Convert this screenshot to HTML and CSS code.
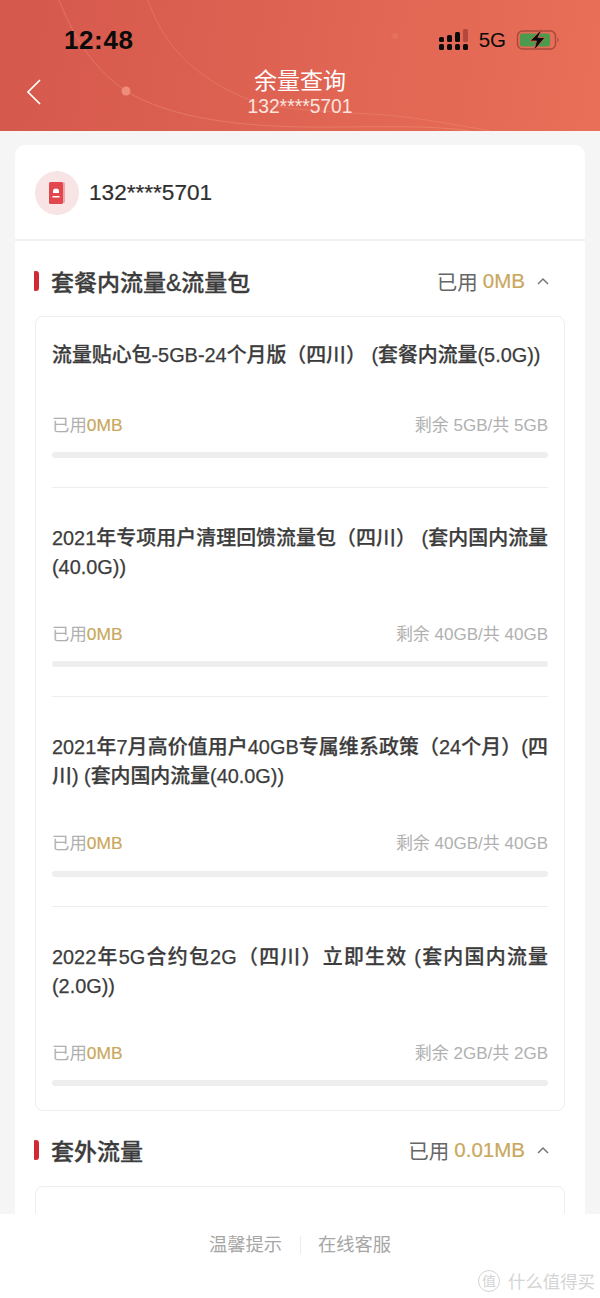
FILE: index.html
```html
<!DOCTYPE html>
<html lang="zh-CN">
<head>
    <meta charset="UTF-8">
    <meta name="viewport" content="width=device-width, initial-scale=1.0">
    <title>余量查询</title>
    <link rel="stylesheet" href="styles.css">
</head>
<body>
    <div class="page">
        <header class="header">
            <svg class="header-art" width="600" height="131" viewBox="0 0 600 131" fill="none">
                <path d="M59 0C75 40 95 70 126 91C170 118 240 128 330 127C380 127 430 125 470 131" stroke="#f0957f" stroke-width="1" opacity="0.45"/>
                <path d="M148 0C165 50 200 80 250 100C300 115 360 110 420 119C445 123 470 127 490 131" stroke="#f0957f" stroke-width="1" opacity="0.35"/>
                <circle cx="126" cy="91" r="4.500" fill="#ee8d79"/>
                <circle cx="395" cy="36" r="3" fill="#ec7f6b" opacity="0.4"/>
            </svg>
            <div class="status-bar">
                <span class="time">12:48</span>
                <div class="status-icons">
                    <svg width="30" height="22" viewBox="0 0 30 22">
                        <g fill="#0b0b0b">
                            <rect x="0" y="15" width="5" height="6" rx="1.500"/>
                            <rect x="8" y="15" width="5" height="6" rx="1.500"/>
                            <rect x="16" y="15" width="5" height="6" rx="1.500"/>
                            <rect x="24" y="15" width="5" height="6" rx="1.500"/>
                            <rect x="0" y="8" width="5" height="5" rx="1.500"/>
                            <rect x="8" y="6" width="5" height="7" rx="1.500"/>
                            <rect x="16" y="3" width="5" height="10" rx="1.500"/>
                        </g>
                        <rect x="24" y="0" width="5" height="13" rx="1.500" fill="#b5483c"/>
                    </svg>
                    <span class="net">5G</span>
                    <svg width="45" height="22" viewBox="0 0 45 22">
                        <rect x="1.500" y="2" width="38" height="18" rx="5" fill="none" stroke="#a84a3c" stroke-width="1.500"/>
                        <rect x="4" y="4.500" width="30" height="13" rx="2" fill="#4c9a4e"/>
                        <path d="M41.500 8.500c1.500.5 1.500 4.500 0 5z" fill="#a84a3c"/>
                        <path d="M26 0L14 12h6.500L18 21.500L29 8.500h-7z" fill="#0b0b0b" stroke="#d8604f" stroke-width="0.800"/>
                    </svg>
                </div>
            </div>
            <div class="nav-bar">
                <svg class="back" width="16" height="28" viewBox="0 0 16 28" fill="none">
                    <path d="M14 2L2 14l12 12" stroke="#fff" stroke-width="1.700"/>
                </svg>
                <div class="nav-title">余量查询</div>
                <div class="nav-sub">132****5701</div>
            </div>
        </header>

        <main class="content">
            <div class="card">
                <div class="user-row">
                    <div class="sim-icon">
                        <svg width="16" height="24" viewBox="0 0 16 24">
                            <rect x="3" y="1" width="13" height="21" rx="1.500" fill="#f0a5aa"/>
                            <rect x="0" y="1" width="14" height="22" rx="1.500" fill="#e2474f"/>
                            <path d="M4 10c0-1.500 1-2.500 3-2.500s3 1 3 2.500v2H4z" fill="#fff"/>
                            <rect x="3.500" y="15" width="7" height="1.500" fill="#fff"/>
                        </svg>
                    </div>
                    <span class="user-num">132****5701</span>
                </div>

                <section class="section">
                    <div class="section-head">
                        <h2 class="section-title">套餐内流量&amp;流量包</h2>
                        <div class="section-used">已用 <em>0MB</em>
                            <svg class="chevron" width="12" height="8" viewBox="0 0 12 8" fill="none"><path d="M1 7l5-5 5 5" stroke="#777" stroke-width="1.500"/></svg>
                        </div>
                    </div>
                    <div class="box">
                        <div class="item">
                            <p class="item-title">流量贴心包-5GB-24个月版（四川） (套餐内流量(5.0G))</p>
                            <div class="item-nums"><span class="used">已用<em>0MB</em></span><span>剩余 5GB/共 5GB</span></div>
                            <div class="bar"></div>
                        </div>
                        <div class="item">
                            <p class="item-title">2021年专项用户清理回馈流量包（四川） (套内国内流量(40.0G))</p>
                            <div class="item-nums"><span class="used">已用<em>0MB</em></span><span>剩余 40GB/共 40GB</span></div>
                            <div class="bar"></div>
                        </div>
                        <div class="item">
                            <p class="item-title">2021年7月高价值用户40GB专属维系政策（24个月）(四川) (套内国内流量(40.0G))</p>
                            <div class="item-nums"><span class="used">已用<em>0MB</em></span><span>剩余 40GB/共 40GB</span></div>
                            <div class="bar"></div>
                        </div>
                        <div class="item">
                            <p class="item-title">2022年5G合约包2G（四川）立即生效 (套内国内流量(2.0G))</p>
                            <div class="item-nums"><span class="used">已用<em>0MB</em></span><span>剩余 2GB/共 2GB</span></div>
                            <div class="bar"></div>
                        </div>
                    </div>
                </section>

                <section class="section">
                    <div class="section-head">
                        <h2 class="section-title">套外流量</h2>
                        <div class="section-used">已用 <em>0.01MB</em>
                            <svg class="chevron" width="12" height="8" viewBox="0 0 12 8" fill="none"><path d="M1 7l5-5 5 5" stroke="#777" stroke-width="1.500"/></svg>
                        </div>
                    </div>
                    <div class="box box-tall"></div>
                </section>
            </div>
        </main>

        <footer class="footer">
            <a class="foot-link">温馨提示</a>
            <span class="foot-line"></span>
            <a class="foot-link">在线客服</a>
            <div class="watermark">
                <span class="wm-circle">值</span>
                <span>什么值得买</span>
            </div>
        </footer>
    </div>
</body>
</html>
```

FILE: styles.css
```css
* {
    box-sizing: border-box;
}
body, html {
    margin: 0;
    padding: 0;
    width: 100%;
    height: 100%;
    overflow: hidden;
    background-color: #f5f5f5;
    font-family: "Liberation Sans", "Noto Sans CJK SC", sans-serif;
}
em {
    font-style: normal;
}
.page {
    height: 1298px;
    display: flex;
    flex-direction: column;
}

/* Header */
.header {
    position: relative;
    height: 131px;
    flex: none;
    background: linear-gradient(100deg, #d5584d, #e96f58);
    color: white;
}
.header-art {
    position: absolute;
    top: 0;
    left: 0;
}
.status-bar {
    position: relative;
    height: 62px;
    padding: 18px 39px 0 64px;
    display: flex;
    justify-content: space-between;
    align-items: center;
    color: #0b0b0b;
}
.time {
    font-size: 26px;
    font-weight: 700;
    letter-spacing: 0.6px;
}
.status-icons {
    display: flex;
    align-items: center;
    gap: 10px;
}
.net {
    font-size: 20.500px;
}
.nav-bar {
    position: relative;
    text-align: center;
    padding-top: 5px;
}
.back {
    position: absolute;
    left: 26px;
    top: 16px;
}
.nav-title {
    font-size: 23px;
    line-height: 28px;
}
.nav-sub {
    font-size: 19.300px;
    line-height: 24px;
    color: #fbe4df;
}

/* Content */
.content {
    flex: 1;
    min-height: 0;
    overflow: hidden;
    padding: 14px 15px 0;
}
.card {
    background: white;
    border-radius: 10px 10px 0 0;
}
.user-row {
    height: 96px;
    padding: 2px 20px 0;
    display: flex;
    align-items: center;
    gap: 10px;
    border-bottom: 2px solid #f2f2f2;
}
.sim-icon {
    width: 44px;
    height: 44px;
    border-radius: 50%;
    background: #f8e3e5;
    display: flex;
    justify-content: center;
    align-items: center;
}
.user-num {
    font-size: 22.600px;
    color: #2f2f2f;
    -webkit-text-stroke: 0.2px #2f2f2f;
}
.section {
    padding: 0 20px;
}
.section-head {
    height: 75px;
    padding: 4px 16px 0 0;
    display: flex;
    justify-content: space-between;
    align-items: center;
}
.section-title {
    margin: 0 0 0 -1px;
    display: flex;
    align-items: center;
    gap: 12px;
    font-size: 23px;
    font-weight: 500;
    color: #3c3c3c;
    -webkit-text-stroke: 0.3px #3c3c3c;
}
.section-title::before {
    content: "";
    width: 5px;
    height: 20px;
    border-radius: 1px 3px 3px 1px;
    background: #d02b33;
}
.section-used {
    font-size: 20.500px;
    color: #666;
    display: flex;
    align-items: center;
    gap: 5px;
}
.section-used em {
    color: #c9a85d;
    -webkit-text-stroke: 0.2px #c9a85d;
}
.chevron {
    margin-left: 7px;
}
.box {
    border: 1px solid #eeeeee;
    border-radius: 8px;
    padding: 0 16px;
}
.box-tall {
    height: 120px;
}

/* Items */
.item {
    padding: 36px 0 29px;
    border-bottom: 1px solid #eeeeee;
}
.item:first-child {
    padding: 24px 0 28.500px;
}
.item:last-child {
    border-bottom: none;
    padding-bottom: 23.500px;
}
.item-title {
    margin: 0 0 42px;
    font-size: 19.900px;
    font-weight: 500;
    line-height: 29px;
    text-align: justify;
    color: #3c3c3c;
    -webkit-text-stroke: 0.25px #3c3c3c;
}
.item:first-child .item-title {
    margin-bottom: 44.500px;
}
.item-nums {
    display: flex;
    justify-content: space-between;
    align-items: baseline;
    height: 20px;
    font-size: 17px;
    line-height: 20px;
    color: #b0b0b0;
}
.used {
    font-size: 17.400px;
}
.item-nums em {
    color: #c9a85d;
    -webkit-text-stroke: 0.2px #c9a85d;
}
.bar {
    height: 6px;
    margin-top: 17.500px;
    border-radius: 3px;
    background: #eeeeee;
}

/* Footer */
.footer {
    position: relative;
    height: 84px;
    flex: none;
    background: white;
    display: flex;
    justify-content: center;
    align-items: flex-start;
    padding-top: 19px;
    gap: 17.500px;
}
.foot-link {
    font-size: 18.300px;
    line-height: 24px;
    color: #a6a6a6;
}
.foot-line {
    width: 1px;
    height: 18px;
    margin-top: 3px;
    background: #ececec;
}
.watermark {
    position: absolute;
    right: 5px;
    bottom: 5px;
    display: flex;
    align-items: center;
    gap: 8px;
    font-size: 17.400px;
    color: #d4d4d4;
}
.wm-circle {
    width: 22px;
    height: 22px;
    border: 1px solid #d4d4d4;
    border-radius: 50%;
    font-size: 14px;
    line-height: 20px;
    text-align: center;
}
```
